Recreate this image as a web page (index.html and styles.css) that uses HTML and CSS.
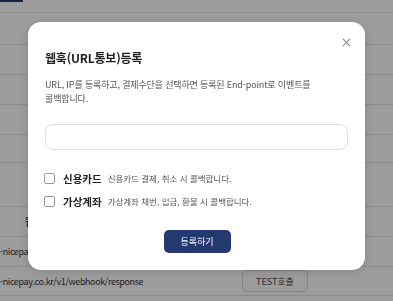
FILE: index.html
```html
<!DOCTYPE html>
<html lang="ko">
<head>
  <meta charset="UTF-8">
  <meta name="viewport" content="width=device-width, initial-scale=1.0">
  <title>웹훅 등록</title>
  <link rel="stylesheet" href="styles.css">
</head>
<body>
  <div class="page">
    <div class="topbar"><span class="tab"></span></div>
    <div class="row r32"></div>
    <div class="row r30"></div>
    <div class="row r30"></div>
    <div class="row r30"></div>
    <div class="row r28"></div>
    <div class="row r44"></div>
    <div class="row r30"><span class="head">웹훅 URL</span></div>
    <div class="row r30">
      <span class="url">-nicepay.co.kr/v1/webhook/response</span>
    </div>
    <div class="row r29">
      <span class="url">-nicepay.co.kr/v1/webhook/response</span>
      <span class="test-btn">TEST호출</span>
    </div>
  </div>

  <div class="overlay">
    <div class="modal">
      <button class="close" aria-label="닫기">
        <svg width="9" height="9" viewBox="0 0 10 10">
          <path d="M1 1 L9 9 M9 1 L1 9" stroke="#8a8a8a" stroke-width="1.2" fill="none"/>
        </svg>
      </button>
      <h2>웹훅(URL통보)등록</h2>
      <p class="desc">URL, IP를 등록하고, 결제수단을 선택하면 등록된 End-point로 이벤트를<br>콜백합니다.</p>
      <input class="url-input" type="text">
      <div class="options">
        <label class="option">
          <span class="check"></span>
          <strong>신용카드</strong>
          <span class="hint">신용카드 결제, 취소 시 콜백합니다.</span>
        </label>
        <label class="option">
          <span class="check"></span>
          <strong>가상계좌</strong>
          <span class="hint">가상계좌 채번, 입금, 환불 시 콜백합니다.</span>
        </label>
      </div>
      <div class="actions">
        <button class="submit">등록하기</button>
      </div>
    </div>
  </div>
</body>
</html>
```

FILE: styles.css
```css
body {
  margin: 0;
  background: #fff;
  font-family: 'Noto Sans CJK KR', 'Noto Sans', sans-serif;
  color: #333;
  overflow: hidden;
}
.page {
  width: 393px;
}
.topbar {
  height: 13px;
  border-bottom: 1px solid #e4e4e4;
  box-sizing: border-box;
}
.topbar .tab {
  display: block;
  width: 23px;
  height: 2px;
  background: #24386f;
}
.row {
  display: flex;
  align-items: center;
  border-bottom: 1px solid #e4e4e4;
  box-sizing: border-box;
}
.r32 { height: 32px; }
.r30 { height: 30px; }
.r28 { height: 28px; }
.r29 { height: 29px; }
.r44 { height: 44px; }
.head {
  padding-left: 25px;
  font-size: 10px;
  font-weight: bold;
}
.url {
  width: 142px;
  white-space: nowrap;
  font-size: 9px;
  letter-spacing: -0.4px;
  color: #333;
}
.test-btn {
  margin-left: 100px;
  width: 66px;
  height: 22px;
  border: 1px solid #d8d8d8;
  border-radius: 5px;
  box-sizing: border-box;
  display: flex;
  align-items: center;
  justify-content: center;
  font-size: 9px;
  color: #444;
}
.overlay {
  position: fixed;
  inset: 0;
  background: rgba(0, 0, 0, 0.39);
  display: flex;
  justify-content: center;
  align-items: flex-start;
  padding-top: 22px;
}
.modal {
  position: relative;
  width: 337px;
  height: 248px;
  box-sizing: border-box;
  background: #fff;
  border-radius: 13px;
  padding: 26px 17px 17px;
  box-shadow: 0 2px 10px rgba(0, 0, 0, 0.15);
}
.close {
  position: absolute;
  top: 16px;
  right: 14px;
  width: 9px;
  height: 9px;
  padding: 0;
  border: none;
  background: none;
  display: flex;
}
.modal h2 {
  margin: 0;
  font-size: 12px;
  line-height: 20px;
  font-weight: bold;
  letter-spacing: -0.2px;
  color: #222;
}
.desc {
  margin: 10px 0 0;
  font-size: 9px;
  line-height: 14px;
  letter-spacing: -0.15px;
  color: #555;
}
.url-input {
  display: block;
  margin-top: 18px;
  width: 303px;
  height: 26px;
  box-sizing: border-box;
  border: 1px solid #dedede;
  border-radius: 8px;
  outline: none;
}
.options {
  margin-top: 20px;
  display: flex;
  flex-direction: column;
  gap: 7px;
}
.option {
  display: flex;
  align-items: center;
  height: 16px;
}
.check {
  width: 11px;
  height: 11px;
  box-sizing: border-box;
  border: 1px solid #999;
  border-radius: 2px;
  margin-left: -1px;
  margin-right: 8px;
}
.option strong {
  font-size: 10.5px;
  color: #222;
  margin-right: 6px;
}
.hint {
  font-size: 8.5px;
  color: #555;
}
.actions {
  display: flex;
  justify-content: center;
  margin-top: 21px;
}
.submit {
  width: 67px;
  height: 23px;
  border: none;
  border-radius: 5px;
  background: #24396f;
  color: #fff;
  font-family: inherit;
  font-size: 9px;
  margin-left: 1px;
}
```
